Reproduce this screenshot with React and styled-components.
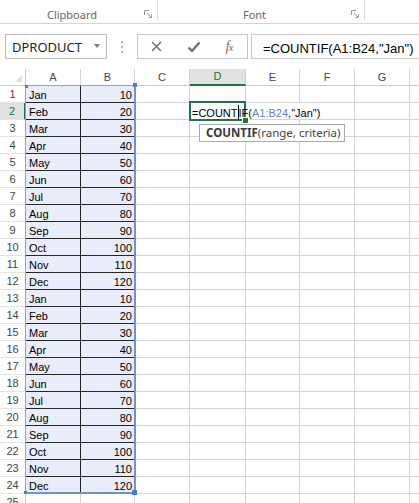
import React from 'react';
import styled, { createGlobalStyle, css } from 'styled-components';

const GREEN = '#217346';
const GRID = '#d4d4d4';
const REF_BLUE = '#7093d6';
const UI_FONT = "'Noto Sans', 'Open Sans', sans-serif";
const CELL_FONT = "'Liberation Sans', Arial, sans-serif";

const COLUMNS = ['A', 'B', 'C', 'D', 'E', 'F', 'G', 'H'];
const WIDTHS = [26, 55, 54, 55, 56, 54, 55, 55, 55];
const MONTHS = ['Jan', 'Feb', 'Mar', 'Apr', 'May', 'Jun', 'Jul', 'Aug', 'Sep', 'Oct', 'Nov', 'Dec'];
const DATA = [...MONTHS, ...MONTHS].map((month, i) => ({ month, value: ((i % 12) + 1) * 10 }));
const ROW_COUNT = 25;

const GlobalStyle = createGlobalStyle`
  html, body {
    margin: 0;
    padding: 0;
    background: #fff;
    overflow: hidden;
  }
`;

const Window = styled.div`
  width: 419px;
  height: 503px;
  overflow: hidden;
  background: #fff;
  display: flex;
  flex-direction: column;
`;

/* ribbon group captions */
const Ribbon = styled.div`
  display: flex;
  height: 23px;
  border-bottom: 1px solid #d5d5d5;
  flex-shrink: 0;
`;

const Group = styled.div`
  display: flex;
  align-items: flex-end;
  width: ${p => p.$width ? `${p.$width}px` : 'auto'};
  flex: ${p => p.$width ? 'none' : 1};
  padding-bottom: 1px;
  box-sizing: border-box;
`;

const GroupLabel = styled.div`
  flex: 1;
  text-align: center;
  font: 11px ${UI_FONT};
  color: #666;
`;

const Launcher = styled.svg`
  width: 9px;
  height: 9px;
  margin: 0 4px 3px 0;
  flex-shrink: 0;
`;

const Separator = styled.div`
  width: 1px;
  height: 20px;
  align-self: flex-start;
  background: #dadada;
`;

const DialogLauncher = () => (
  <Launcher viewBox="0 0 9 9">
    <path d="M0.5 5V0.5H5" fill="none" stroke="#9a9a9a" strokeWidth="1" />
    <path d="M3 3L7.5 7.5M7.5 4.5V7.5H4.5" fill="none" stroke="#9a9a9a" strokeWidth="1" />
  </Launcher>
);

/* name box + formula bar */
const FormulaRow = styled.div`
  display: flex;
  align-items: flex-start;
  height: 45px;
  padding: 10px 0 0 5px;
  box-sizing: border-box;
  flex-shrink: 0;
`;

const NameBox = styled.div`
  display: flex;
  align-items: center;
  width: 102px;
  height: 25px;
  box-sizing: border-box;
  border: 1px solid #bdbdbd;
  padding: 0 6px 0 6px;
  font: 13px ${UI_FONT};
  color: #262626;
`;

const NameText = styled.span`
  flex: 1;
`;

const DropCaret = styled.span`
  width: 0;
  height: 0;
  border-left: 3.5px solid transparent;
  border-right: 3.5px solid transparent;
  border-top: 4px solid #7a7a7a;
  margin-bottom: 2px;
`;

const Grip = styled.div`
  display: flex;
  flex-direction: column;
  gap: 3px;
  margin: 7px 14px 0 14px;
`;

const GripDot = styled.span`
  width: 2px;
  height: 2px;
  background: #b5b5b5;
`;

const ButtonBox = styled.div`
  display: flex;
  align-items: center;
  width: 111px;
  height: 25px;
  box-sizing: border-box;
  border: 1px solid #c6c6c6;
`;

const BarButton = styled.div`
  width: ${p => p.$w}px;
  display: flex;
  justify-content: center;
  align-items: center;
`;

const FxGlyph = styled.span`
  font-family: 'Liberation Serif', 'DejaVu Serif', serif;
  font-style: italic;
  color: #6e6e6e;
  font-size: 14px;
  line-height: 1;
  letter-spacing: -1px;

  small {
    font-size: 11px;
  }
`;

const FormulaInput = styled.div`
  flex: 1;
  height: 25px;
  margin-left: 3px;
  box-sizing: border-box;
  border: 1px solid #c6c6c6;
  border-right: none;
  padding: 3px 0 0 11px;
  display: flex;
  align-items: center;
  font: 13px ${CELL_FONT};
  color: #000;
  white-space: nowrap;
`;

/* worksheet */
const Sheet = styled.div`
  position: relative;
  display: grid;
  grid-template-columns: ${WIDTHS.map(w => `${w}px`).join(' ')};
  grid-auto-rows: 17px;
`;

const HeadBase = css`
  box-sizing: border-box;
  background: #fff;
  color: #444;
  font: 11px/16px ${CELL_FONT};
  text-align: center;
`;

const Corner = styled.div`
  ${HeadBase};
  position: relative;
  border-right: 1px solid #c8c8c8;
  border-bottom: 1px solid #c8c8c8;

  &::after {
    content: '';
    position: absolute;
    right: 3px;
    bottom: 3px;
    border-left: 7px solid transparent;
    border-bottom: 7px solid #dfdfdf;
  }
`;

const ColHead = styled.div`
  ${HeadBase};
  border-right: 1px solid ${GRID};
  border-bottom: 1px solid #c8c8c8;
  ${p => p.$active && css`
    background: #e1e1e1;
    color: ${GREEN};
    border-bottom: 2px solid ${GREEN};
    line-height: 15px;
  `}
`;

const RowHead = styled.div`
  ${HeadBase};
  line-height: 17px;
  border-right: 1px solid #c8c8c8;
  border-bottom: 1px solid #e3e3e3;
  ${p => p.$active && css`
    background: #e1e1e1;
    color: ${GREEN};
    border-right: 2px solid ${GREEN};
  `}
`;

const Cell = styled.div`
  position: relative;
  box-sizing: border-box;
  border-right: 1px solid ${GRID};
  border-bottom: 1px solid ${GRID};
  padding: 2px 2px 0 3px;
  font: 11px/14px ${CELL_FONT};
  color: #000;
  white-space: nowrap;
  text-align: ${p => p.$align || 'left'};
  ${p => p.$data && css`
    background: #e9edf9;
    border-right-color: #262626;
    border-bottom-color: #262626;
  `}
  ${p => p.$overflowed && css`
    border-right-color: transparent;
  `}
  ${p => p.$active && css`
    z-index: 2;
    overflow: visible;
    padding-left: 2px;

    &::before {
      content: '';
      position: absolute;
      left: -1px;
      top: -2px;
      right: -1px;
      bottom: -2px;
      border: 2px solid ${GREEN};
      pointer-events: none;
    }

    &::after {
      content: '';
      position: absolute;
      right: -4px;
      bottom: -5px;
      width: 5px;
      height: 5px;
      background: ${GREEN};
      border: 1px solid #fff;
    }
  `}
`;

/* text being typed sits over the active-cell frame */
const EditText = styled.span`
  position: relative;
`;

const RefText = styled.span`
  color: #5f86d2;
`;

const TextCursor = styled.span`
  display: inline-block;
  width: 1px;
  height: 15px;
  margin-bottom: -3px;
  background: #000;
`;

const FunctionTip = styled.div`
  position: absolute;
  left: 9px;
  top: 21px;
  z-index: 3;
  height: 18px;
  box-sizing: border-box;
  padding: 0 4px 0 6px;
  border: 1px solid #a9a9a9;
  background: #fff;
  font: 11.5px/16px ${UI_FONT};
  color: #444;
  white-space: nowrap;

  b {
    font-weight: 700;
    color: #3a3a3a;
  }
`;

const RangeOutline = styled.div`
  position: absolute;
  left: 25px;
  top: 16px;
  width: 111px;
  height: 409px;
  box-sizing: border-box;
  border: 1px solid #8aa3d6;
  border-right: 2px solid ${REF_BLUE};
  border-bottom: 2px solid ${REF_BLUE};
  pointer-events: none;
  z-index: 1;
`;

const Handle = styled.span`
  position: absolute;
  width: ${p => p.$size}px;
  height: ${p => p.$size}px;
  background: #4f79c9;
  ${p => p.$top ? 'top' : 'bottom'}: -${p => p.$off}px;
  ${p => p.$left ? 'left' : 'right'}: -${p => p.$off}px;
`;

const App = () => {
  const rows = Array.from({ length: ROW_COUNT }, (_, i) => i + 1);

  return (
    <>
      <GlobalStyle />
      <Window>
        <Ribbon>
          <Group $width={157}>
            <GroupLabel>Clipboard</GroupLabel>
            <DialogLauncher />
          </Group>
          <Separator />
          <Group $width={206}>
            <GroupLabel>Font</GroupLabel>
            <DialogLauncher />
          </Group>
          <Separator />
          <Group />
        </Ribbon>

        <FormulaRow>
          <NameBox>
            <NameText>DPRODUCT</NameText>
            <DropCaret />
          </NameBox>
          <Grip>
            <GripDot />
            <GripDot />
            <GripDot />
          </Grip>
          <ButtonBox>
            <BarButton $w={36}>
              <svg width="11" height="11" viewBox="0 0 11 11">
                <path d="M1 1L10 10M10 1L1 10" stroke="#6a6a6a" strokeWidth="1.4" />
              </svg>
            </BarButton>
            <BarButton $w={40}>
              <svg width="14" height="12" viewBox="0 0 14 12">
                <path d="M1.5 6.5L5 10L12.5 1.5" fill="none" stroke="#6a6a6a" strokeWidth="2.2" />
              </svg>
            </BarButton>
            <BarButton $w={30}>
              <FxGlyph>f<small>x</small></FxGlyph>
            </BarButton>
          </ButtonBox>
          <FormulaInput>=COUNTIF(A1:B24,"Jan")</FormulaInput>
        </FormulaRow>

        <Sheet>
          <Corner />
          {COLUMNS.map(c => (
            <ColHead key={c} $active={c === 'D'}>{c}</ColHead>
          ))}

          {rows.map(r => {
            const item = DATA[r - 1];
            return (
              <React.Fragment key={r}>
                <RowHead $active={r === 2}>{r}</RowHead>
                <Cell $data={!!item}>{item ? item.month : ''}</Cell>
                <Cell $data={!!item} $align="right">{item ? item.value : ''}</Cell>
                <Cell />
                {r === 2 ? (
                  <Cell $active>
                    <EditText>
                      =COUNT<TextCursor />IF(<RefText>A1:B24</RefText>,"Jan")
                    </EditText>
                    <FunctionTip>
                      <b>COUNTIF</b>(range, criteria)
                    </FunctionTip>
                  </Cell>
                ) : (
                  <Cell />
                )}
                <Cell $overflowed={r === 2} />
                <Cell />
                <Cell />
                <Cell />
              </React.Fragment>
            );
          })}

          <RangeOutline>
            <Handle $top $left $size={3} $off={1} />
            <Handle $top $size={4} $off={3} />
            <Handle $left $size={3} $off={2} />
            <Handle $size={5} $off={3} />
          </RangeOutline>
        </Sheet>
      </Window>
    </>
  );
};

export default App;
